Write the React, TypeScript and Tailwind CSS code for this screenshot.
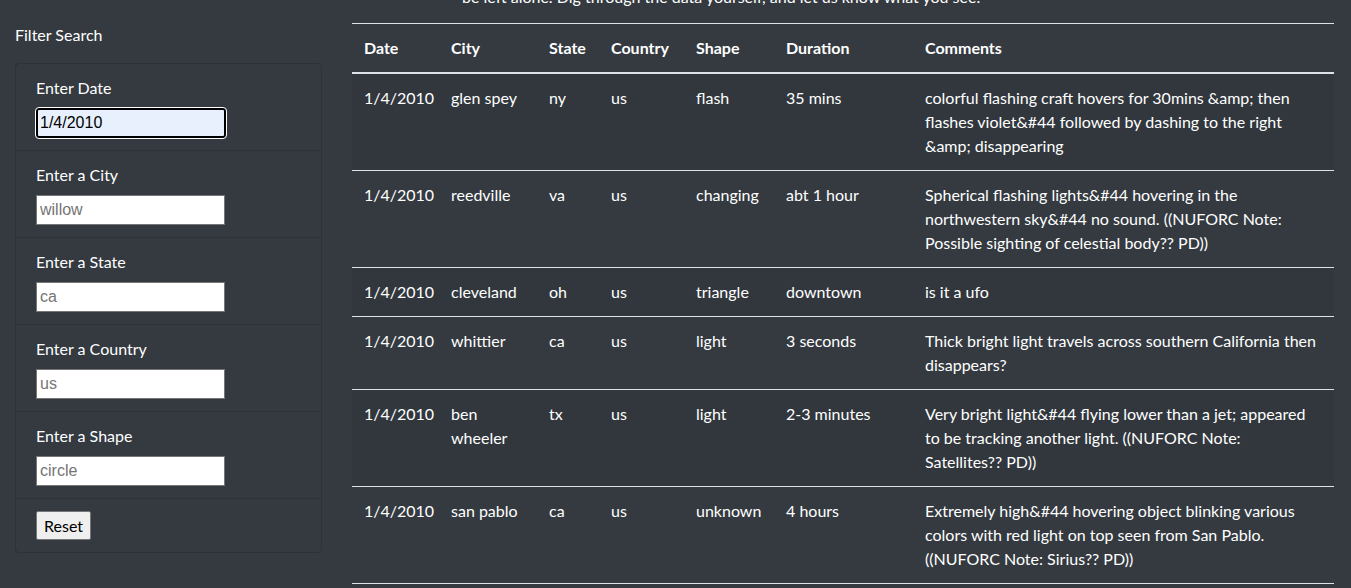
import React from "react";

interface Sighting {
  date: string;
  city: string;
  state: string;
  country: string;
  shape: string;
  duration: string;
  comments: string;
}

const sightings: Sighting[] = [
  {
    date: "1/4/2010",
    city: "glen spey",
    state: "ny",
    country: "us",
    shape: "flash",
    duration: "35 mins",
    comments: "colorful flashing craft hovers for 30mins &amp; then flashes violet&#44 followed by dashing to the right &amp; disappearing",
  },
  {
    date: "1/4/2010",
    city: "reedville",
    state: "va",
    country: "us",
    shape: "changing",
    duration: "abt 1 hour",
    comments: "Spherical flashing lights&#44 hovering in the northwestern sky&#44 no sound. ((NUFORC Note: Possible sighting of celestial body?? PD))",
  },
  {
    date: "1/4/2010",
    city: "cleveland",
    state: "oh",
    country: "us",
    shape: "triangle",
    duration: "downtown",
    comments: "is it a ufo",
  },
  {
    date: "1/4/2010",
    city: "whittier",
    state: "ca",
    country: "us",
    shape: "light",
    duration: "3 seconds",
    comments: "Thick bright light travels across southern California then disappears?",
  },
  {
    date: "1/4/2010",
    city: "ben wheeler",
    state: "tx",
    country: "us",
    shape: "light",
    duration: "2-3 minutes",
    comments: "Very bright light&#44 flying lower than a jet; appeared to be tracking another light. ((NUFORC Note: Satellites?? PD))",
  },
  {
    date: "1/4/2010",
    city: "san pablo",
    state: "ca",
    country: "us",
    shape: "unknown",
    duration: "4 hours",
    comments: "Extremely high&#44 hovering object blinking various colors with red light on top seen from San Pablo. ((NUFORC Note: Sirius?? PD))",
  },
];

const filters = [
  { label: "Enter a City", placeholder: "willow" },
  { label: "Enter a State", placeholder: "ca" },
  { label: "Enter a Country", placeholder: "us" },
  { label: "Enter a Shape", placeholder: "circle" },
];

const App = () => {
  return (
    <div
      className="min-h-[588px] bg-[#343a40] text-white text-base leading-6 overflow-hidden"
      style={{ fontFamily: "Lato, 'Open Sans', sans-serif" }}
    >
      <div className="flex">
        {/* sidebar */}
        <div className="w-[337px] shrink-0 px-[15px] pt-[23px]">
          <div className="mb-4">Filter Search</div>
          <div className="rounded border border-[#2d3237]">
            <div className="px-5 py-3 border-b border-[#2d3237]">
              <label className="block mb-2">Enter Date</label>
              <input
                className="block w-[190px] h-[30px] px-[2px] bg-[#e8f0fe] text-black rounded-[3px] border-2 border-black outline outline-1 outline-white"
                defaultValue="1/4/2010"
                style={{ fontFamily: "'Liberation Sans', Arial, sans-serif" }}
              />
            </div>
            {filters.map((f) => (
              <div key={f.label} className="px-5 py-3 border-b border-[#2d3237]">
                <label className="block mb-2">{f.label}</label>
                <input
                  className="block w-[189px] h-[30px] px-[3px] bg-white text-black border border-[#767676] placeholder:text-[#757575]"
                  placeholder={f.placeholder}
                  style={{ fontFamily: "'Liberation Sans', Arial, sans-serif" }}
                />
              </div>
            ))}
            <div className="px-5 py-3">
              <button className="h-[29px] px-[7px] bg-[#efefef] text-black border border-[#767676] rounded-[2px]">
                Reset
              </button>
            </div>
          </div>
        </div>

        {/* results */}
        <div className="w-[982px] shrink-0 ml-[15px]">
          <p className="-mt-[15px] pl-[110px] whitespace-nowrap">
            be left alone. Dig through the data yourself, and let us know what you see.
          </p>
          <table className="mt-[14px] w-full table-fixed border-collapse">
            <colgroup>
              <col className="w-[87px]" />
              <col className="w-[98px]" />
              <col className="w-[62px]" />
              <col className="w-[85px]" />
              <col className="w-[90px]" />
              <col className="w-[139px]" />
              <col />
            </colgroup>
            <thead>
              <tr className="border-t border-[#dee2e6] border-b-2">
                {["Date", "City", "State", "Country", "Shape", "Duration", "Comments"].map((h) => (
                  <th key={h} className="px-3 py-3 text-left font-bold align-bottom">
                    {h}
                  </th>
                ))}
              </tr>
            </thead>
            <tbody>
              {sightings.map((s, i) => (
                <tr
                  key={i}
                  className={`border-b border-[#dee2e6] ${i % 2 === 0 ? "bg-[#31373d]" : "bg-[#343a40]"}`}
                >
                  <td className="px-3 py-3 align-top">{s.date}</td>
                  <td className="px-3 py-3 align-top">{s.city}</td>
                  <td className="px-3 py-3 align-top">{s.state}</td>
                  <td className="px-3 py-3 align-top">{s.country}</td>
                  <td className="px-3 py-3 align-top">{s.shape}</td>
                  <td className="px-3 py-3 align-top">{s.duration}</td>
                  <td className="pl-3 pr-4 py-3 align-top">{s.comments}</td>
                </tr>
              ))}
            </tbody>
          </table>
        </div>
      </div>
    </div>
  );
};

export default App;
